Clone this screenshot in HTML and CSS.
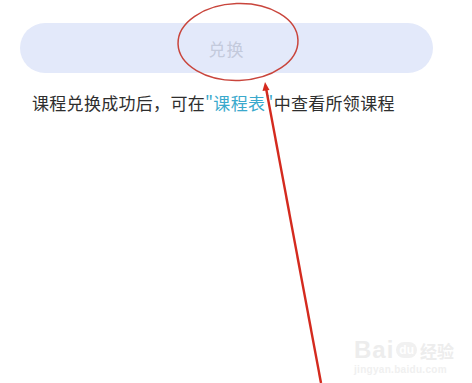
FILE: index.html
```html
<!DOCTYPE html>
<html lang="zh">
<head>
<meta charset="utf-8">
<link rel="stylesheet" href="styles.css">
</head>
<body>
<div class="page">
  <div class="btn">兑换</div>
  <p class="tip">课程兑换成功后，可在<span class="link">"课程表"</span>中查看所领课程</p>
</div>
<svg class="annot" width="472" height="383" viewBox="0 0 472 383">
  <ellipse cx="238" cy="42" rx="60" ry="38.5" fill="none" stroke="#c9453c" stroke-width="1.5" transform="rotate(-2 238 42)"/>
  <line x1="321" y1="383" x2="266" y2="88" stroke="#d42a1e" stroke-width="2.4"/>
  <polygon points="265,82 262.5,91 269.5,90" fill="#d42a1e"/>
</svg>
<div class="wm">
  <div class="wm-top"><span class="wm-bai">Bai</span><span class="wm-paw">du</span><span class="wm-jy">经验</span></div>
  <div class="wm-url">jingyan.baidu.com</div>
</div>
</body>
</html>
```

FILE: styles.css
```css
html, body {
  margin: 0;
  padding: 0;
  background: #ffffff;
  width: 472px;
  height: 383px;
  overflow: hidden;
  font-family: "Noto Sans CJK SC", "Noto Sans", sans-serif;
}
.page {
  padding: 23px 39px 0 20px;
}
.btn {
  height: 50px;
  border-radius: 25px;
  background: #e3e9fa;
  color: #c3cadc;
  font-size: 17px;
  display: flex;
  align-items: center;
  justify-content: center;
  letter-spacing: 1px;
}
.tip {
  margin: 18px 0 0 12px;
  font-size: 17px;
  line-height: 24px;
  color: #2e2e2e;
  white-space: nowrap;
  letter-spacing: 0.3px;
}
.link {
  color: #3aa9cc;
}
.annot {
  position: absolute;
  left: 0;
  top: 0;
  pointer-events: none;
}
.wm {
  position: absolute;
  left: 354px;
  top: 338px;
  color: #ededed;
  font-family: "Liberation Sans", sans-serif;
}
.wm-top {
  display: flex;
  align-items: center;
  height: 24px;
}
.wm-bai {
  font-size: 24px;
  font-weight: bold;
  letter-spacing: 1px;
}
.wm-paw {
  font-size: 12px;
  font-weight: bold;
  background: #f1f1f1;
  color: #fff;
  border-radius: 8px;
  padding: 1px 3px;
  margin: 0 3px 0 2px;
}
.wm-jy {
  font-family: "Noto Sans CJK SC", sans-serif;
  font-size: 17px;
  font-weight: bold;
}
.wm-url {
  font-size: 10px;
  font-weight: bold;
  margin-top: 2px;
  letter-spacing: 0.3px;
  color: #f0f0f0;
}
```
